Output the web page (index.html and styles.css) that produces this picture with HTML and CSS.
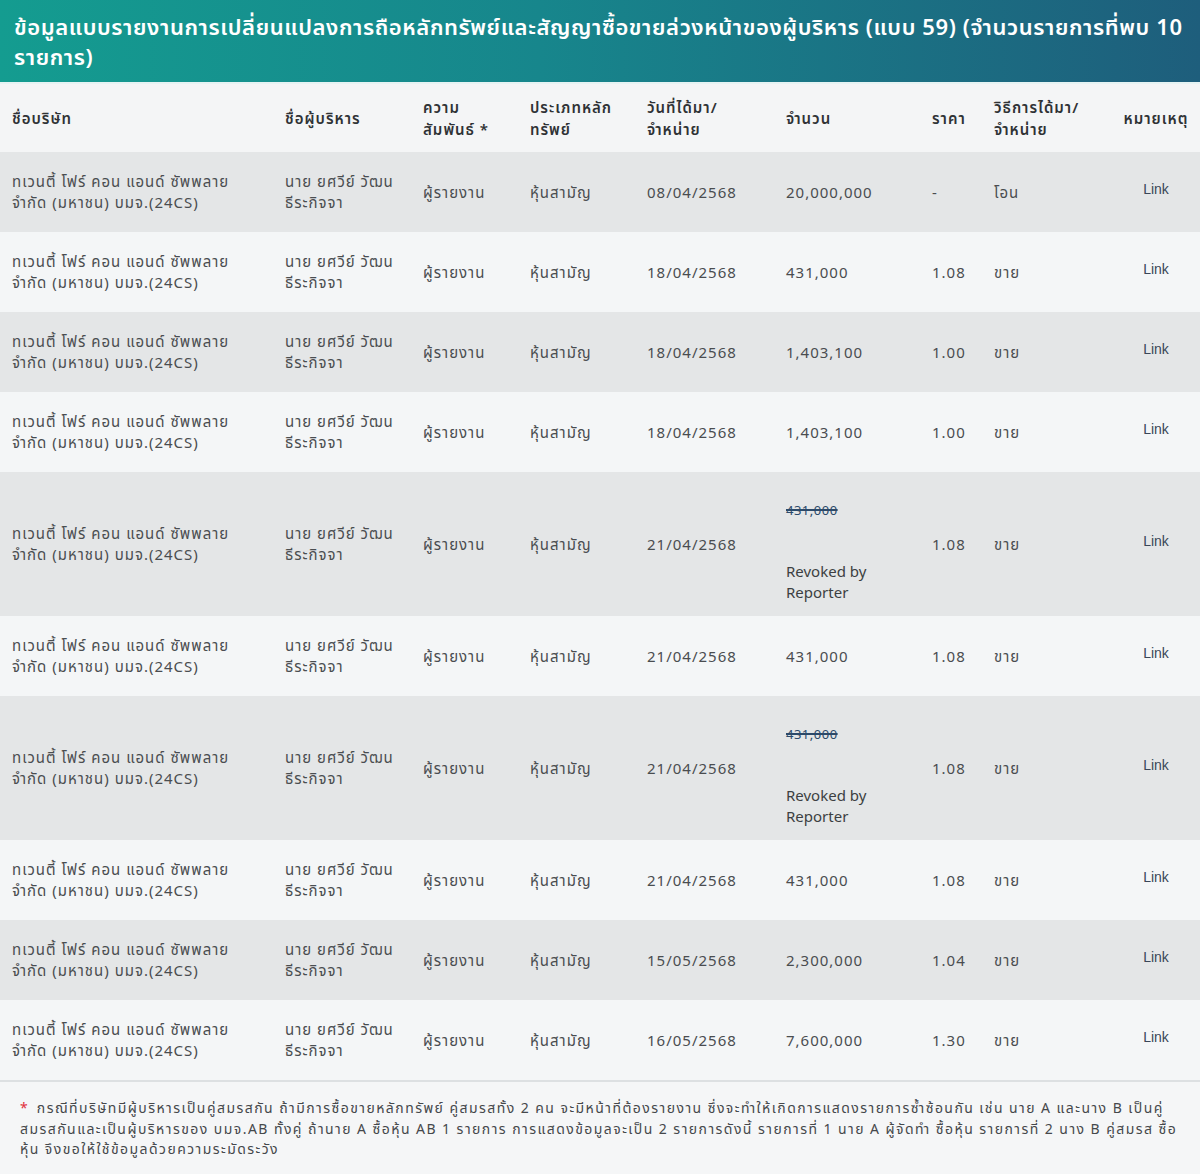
FILE: index.html
```html
<!DOCTYPE html>
<html lang="th">
<head>
<meta charset="utf-8">
<title>แบบ 59</title>
<link rel="stylesheet" href="styles.css">
</head>
<body>
<div class="panel">
  <h1 class="title">ข้อมูลแบบรายงานการเปลี่ยนแปลงการถือหลักทรัพย์และสัญญาซื้อขายล่วงหน้าของผู้บริหาร (แบบ 59) (จำนวนรายการที่พบ 10 รายการ)</h1>
  <table class="grid">
    <colgroup>
      <col class="c1"><col class="c2"><col class="c3"><col class="c4"><col class="c5"><col class="c6"><col class="c7"><col class="c8"><col class="c9">
    </colgroup>
    <thead>
      <tr>
        <th>ชื่อบริษัท</th>
        <th>ชื่อผู้บริหาร</th>
        <th>ความ<br>สัมพันธ์ *</th>
        <th>ประเภทหลัก<br>ทรัพย์</th>
        <th>วันที่ได้มา/<br>จำหน่าย</th>
        <th>จำนวน</th>
        <th>ราคา</th>
        <th>วิธีการได้มา/<br>จำหน่าย</th>
        <th class="center">หมายเหตุ</th>
      </tr>
    </thead>
    <tbody>
      <tr>
        <td>ทเวนตี้ โฟร์ คอน แอนด์ ซัพพลาย<br>จำกัด (มหาชน) บมจ.(24CS)</td>
        <td>นาย ยศวีย์ วัฒน<br>ธีระกิจจา</td>
        <td>ผู้รายงาน</td><td>หุ้นสามัญ</td><td>08/04/2568</td><td>20,000,000</td><td>-</td><td>โอน</td>
        <td class="center"><a class="link">Link</a></td>
      </tr>
      <tr>
        <td>ทเวนตี้ โฟร์ คอน แอนด์ ซัพพลาย<br>จำกัด (มหาชน) บมจ.(24CS)</td>
        <td>นาย ยศวีย์ วัฒน<br>ธีระกิจจา</td>
        <td>ผู้รายงาน</td><td>หุ้นสามัญ</td><td>18/04/2568</td><td>431,000</td><td>1.08</td><td>ขาย</td>
        <td class="center"><a class="link">Link</a></td>
      </tr>
      <tr>
        <td>ทเวนตี้ โฟร์ คอน แอนด์ ซัพพลาย<br>จำกัด (มหาชน) บมจ.(24CS)</td>
        <td>นาย ยศวีย์ วัฒน<br>ธีระกิจจา</td>
        <td>ผู้รายงาน</td><td>หุ้นสามัญ</td><td>18/04/2568</td><td>1,403,100</td><td>1.00</td><td>ขาย</td>
        <td class="center"><a class="link">Link</a></td>
      </tr>
      <tr>
        <td>ทเวนตี้ โฟร์ คอน แอนด์ ซัพพลาย<br>จำกัด (มหาชน) บมจ.(24CS)</td>
        <td>นาย ยศวีย์ วัฒน<br>ธีระกิจจา</td>
        <td>ผู้รายงาน</td><td>หุ้นสามัญ</td><td>18/04/2568</td><td>1,403,100</td><td>1.00</td><td>ขาย</td>
        <td class="center"><a class="link">Link</a></td>
      </tr>
      <tr>
        <td>ทเวนตี้ โฟร์ คอน แอนด์ ซัพพลาย<br>จำกัด (มหาชน) บมจ.(24CS)</td>
        <td>นาย ยศวีย์ วัฒน<br>ธีระกิจจา</td>
        <td>ผู้รายงาน</td><td>หุ้นสามัญ</td><td>21/04/2568</td>
        <td class="revoked"><del class="revoked-num">431,000</del><div class="revoked-note">Revoked by<br>Reporter</div></td>
        <td>1.08</td><td>ขาย</td>
        <td class="center"><a class="link">Link</a></td>
      </tr>
      <tr>
        <td>ทเวนตี้ โฟร์ คอน แอนด์ ซัพพลาย<br>จำกัด (มหาชน) บมจ.(24CS)</td>
        <td>นาย ยศวีย์ วัฒน<br>ธีระกิจจา</td>
        <td>ผู้รายงาน</td><td>หุ้นสามัญ</td><td>21/04/2568</td><td>431,000</td><td>1.08</td><td>ขาย</td>
        <td class="center"><a class="link">Link</a></td>
      </tr>
      <tr>
        <td>ทเวนตี้ โฟร์ คอน แอนด์ ซัพพลาย<br>จำกัด (มหาชน) บมจ.(24CS)</td>
        <td>นาย ยศวีย์ วัฒน<br>ธีระกิจจา</td>
        <td>ผู้รายงาน</td><td>หุ้นสามัญ</td><td>21/04/2568</td>
        <td class="revoked"><del class="revoked-num">431,000</del><div class="revoked-note">Revoked by<br>Reporter</div></td>
        <td>1.08</td><td>ขาย</td>
        <td class="center"><a class="link">Link</a></td>
      </tr>
      <tr>
        <td>ทเวนตี้ โฟร์ คอน แอนด์ ซัพพลาย<br>จำกัด (มหาชน) บมจ.(24CS)</td>
        <td>นาย ยศวีย์ วัฒน<br>ธีระกิจจา</td>
        <td>ผู้รายงาน</td><td>หุ้นสามัญ</td><td>21/04/2568</td><td>431,000</td><td>1.08</td><td>ขาย</td>
        <td class="center"><a class="link">Link</a></td>
      </tr>
      <tr>
        <td>ทเวนตี้ โฟร์ คอน แอนด์ ซัพพลาย<br>จำกัด (มหาชน) บมจ.(24CS)</td>
        <td>นาย ยศวีย์ วัฒน<br>ธีระกิจจา</td>
        <td>ผู้รายงาน</td><td>หุ้นสามัญ</td><td>15/05/2568</td><td>2,300,000</td><td>1.04</td><td>ขาย</td>
        <td class="center"><a class="link">Link</a></td>
      </tr>
      <tr>
        <td>ทเวนตี้ โฟร์ คอน แอนด์ ซัพพลาย<br>จำกัด (มหาชน) บมจ.(24CS)</td>
        <td>นาย ยศวีย์ วัฒน<br>ธีระกิจจา</td>
        <td>ผู้รายงาน</td><td>หุ้นสามัญ</td><td>16/05/2568</td><td>7,600,000</td><td>1.30</td><td>ขาย</td>
        <td class="center"><a class="link">Link</a></td>
      </tr>
    </tbody>
  </table>
  <p class="note"><span class="star">*</span> กรณีที่บริษัทมีผู้บริหารเป็นคู่สมรสกัน ถ้ามีการซื้อขายหลักทรัพย์ คู่สมรสทั้ง 2 คน จะมีหน้าที่ต้องรายงาน ซึ่งจะทำให้เกิดการแสดงรายการซ้ำซ้อนกัน เช่น นาย A และนาง B เป็นคู่สมรสกันและเป็นผู้บริหารของ บมจ.AB ทั้งคู่ ถ้านาย A ซื้อหุ้น AB 1 รายการ การแสดงข้อมูลจะเป็น 2 รายการดังนี้ รายการที่ 1 นาย A ผู้จัดทำ ซื้อหุ้น รายการที่ 2 นาง B คู่สมรส ซื้อหุ้น จึงขอให้ใช้ข้อมูลด้วยความระมัดระวัง</p>
</div>
</body>
</html>
```

FILE: styles.css
```css
html, body {
  margin: 0;
  padding: 0;
  background: #f5f6f7;
}
body {
  font-family: "Noto Sans", "Noto Sans Thai", "Open Sans", sans-serif;
  color: #3c3f42;
}
.panel {
  width: 1200px;
}
.title {
  margin: 0;
  padding: 11px 14px 11px;
  font-size: 22px;
  line-height: 30px;
  letter-spacing: 0.6px;
  font-weight: 600;
  color: #ffffff;
  background: linear-gradient(90deg, #149c90 0%, #17868c 45%, #1e5e7c 100%);
  border-bottom: 2px solid #e6f3f3;
}
.grid {
  width: 1200px;
  border-collapse: collapse;
  table-layout: fixed;
  font-size: 15px;
  line-height: 21px;
  letter-spacing: 1px;
}
.c1 { width: 273px; }
.c2 { width: 138px; }
.c3 { width: 107px; }
.c4 { width: 117px; }
.c5 { width: 139px; }
.c6 { width: 146px; }
.c7 { width: 62px; }
.c8 { width: 130px; }
.c9 { width: 88px; }
.grid th {
  text-align: left;
  font-weight: 600;
  color: #2f3235;
  background: #f4f5f6;
  padding: 12px 4px 12px 12px;
  line-height: 22px;
  vertical-align: middle;
}
.grid td {
  padding: 19px 4px 19px 12px;
  vertical-align: middle;
  color: #4a4d50;
}
.grid tbody tr:nth-child(odd) td {
  background: #e4e6e7;
}
.grid tbody tr:nth-child(even) td {
  background: #f4f6f7;
}
.grid .center {
  text-align: center;
  padding-left: 4px;
}
.link {
  color: #3a4658;
  font-family: "Liberation Sans", sans-serif;
  font-size: 14px;
  letter-spacing: 0;
  position: relative;
  top: -3px;
  cursor: pointer;
}
.grid td.revoked {
  padding-top: 28px;
  padding-bottom: 13px;
}
.revoked-num {
  display: block;
  color: #2c4a6a;
  font-size: 13px;
  letter-spacing: 0.5px;
  text-decoration: line-through;
  text-decoration-thickness: 2px;
}
.revoked-note {
  margin-top: 40px;
  color: #3c3f42;
  letter-spacing: 0;
}
.note {
  margin: 0;
  border-top: 2px solid #dde0e2;
  padding: 16px 20px 14px 20px;
  font-size: 14px;
  line-height: 20.5px;
  letter-spacing: 1.45px;
  color: #45484b;
  background: #f5f6f7;
}
.star {
  display: inline-block;
  color: #e0303c;
  margin-right: 4px;
  letter-spacing: 0;
}
```
